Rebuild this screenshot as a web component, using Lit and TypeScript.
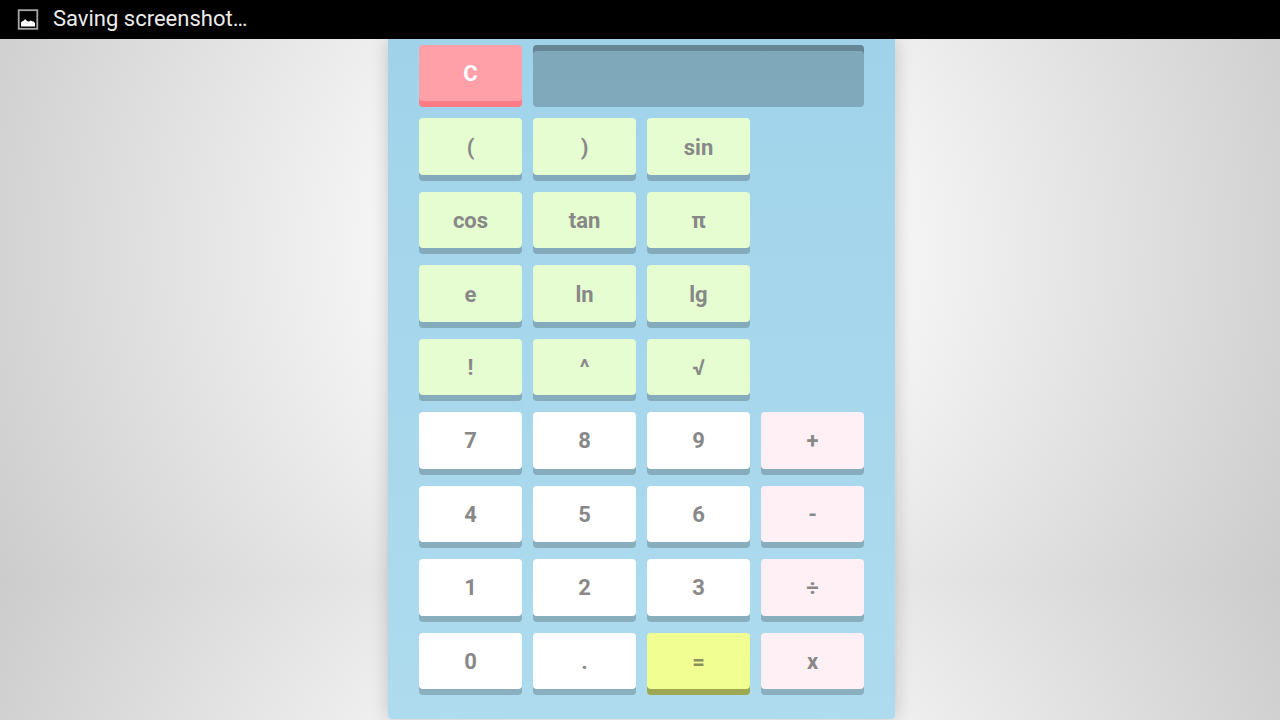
import { LitElement, html, css } from "lit";
import { customElement, state } from "lit/decorators.js";
import { classMap } from "lit/directives/class-map.js";

type Kind = "digit" | "func" | "op" | "equals" | "clear";

const KEY_ROWS: [string, Kind][][] = [
  [["(", "func"], [")", "func"], ["sin", "func"]],
  [["cos", "func"], ["tan", "func"], ["π", "func"]],
  [["e", "func"], ["ln", "func"], ["lg", "func"]],
  [["!", "func"], ["^", "func"], ["√", "func"]],
  [["7", "digit"], ["8", "digit"], ["9", "digit"], ["+", "op"]],
  [["4", "digit"], ["5", "digit"], ["6", "digit"], ["-", "op"]],
  [["1", "digit"], ["2", "digit"], ["3", "digit"], ["÷", "op"]],
  [["0", "digit"], [".", "digit"], ["=", "equals"], ["x", "op"]],
];

@customElement("status-bar")
export class StatusBar extends LitElement {
  static styles = css`
    :host {
      display: flex;
      align-items: center;
      gap: 14px;
      height: 39px;
      padding: 0 17px;
      box-sizing: border-box;
      background: #000;
      color: #ececec;
      font: 400 22px/38px Roboto, sans-serif;
      z-index: 1;
    }
    .icon {
      display: block;
      width: 22px;
      height: 22px;
      flex: none;
    }
    .label {
      height: 39px;
      white-space: nowrap;
    }
  `;

  render() {
    return html`
      <svg class="icon" viewBox="0 0 22 22" aria-hidden="true">
        <rect x="1.7" y="1.2" width="18.6" height="18.6" fill="none" stroke="#a8a8a8" stroke-width="1.8" />
        <path
          d="M4 17.4V13.6L5.6 12L6.6 11.8L7.6 10.4L8.8 10.4L10 12L11.2 12.6L12.6 12.2L13.8 11.6L15 12.2L16.2 12.2L18 14V17.4Z"
          fill="#fff"
        />
      </svg>
      <span class="label">Saving screenshot…</span>
    `;
  }
}

@customElement("calc-pad")
export class CalcPad extends LitElement {
  @state() private value = "";

  static styles = css`
    :host {
      display: grid;
      grid-template-columns: repeat(4, 1fr);
      grid-auto-rows: 1fr;
      gap: 11px;
      box-sizing: border-box;
      width: 100%;
      max-width: 507px;
      padding: 6px 31px 24px;
      border-radius: 0 0 4px 4px;
      background: linear-gradient(#a0d3ea, #aedbee);
      box-shadow: 0 0 18px rgba(0, 0, 0, 0.2);
    }
    .key,
    .display {
      box-sizing: border-box;
      min-width: 0;
      border: 0;
      border-radius: 4px;
      font: 700 22px/26px Roboto, sans-serif;
    }
    .key {
      margin: 0 0 6px;
      padding: 2px 0 0;
      background: #fff;
      color: #888;
      text-align: center;
      cursor: pointer;
      box-shadow: 0 6px rgba(0, 0, 0, 0.2);
    }
    .key:active {
      filter: brightness(0.95);
    }
    .first {
      grid-column-start: 1;
    }
    .func {
      background: #e5fdd0;
    }
    .op {
      background: #fff0f5;
    }
    .equals {
      background: #f1ff92;
      color: #888e5f;
      box-shadow: 0 6px #9da853;
    }
    .clear {
      background: #ff9fa8;
      color: #fff;
      box-shadow: 0 6px #ff7c87;
    }
    .display {
      grid-column: span 3;
      width: 100%;
      padding: 6px 12px 0;
      outline: 0;
      background: rgba(0, 0, 0, 0.2);
      box-shadow: inset 0 6px rgba(0, 0, 0, 0.2);
      color: #fff;
      text-align: right;
    }
  `;

  private press(label: string) {
    this.value = label === "C" ? "" : label === "=" ? this.value : this.value + label;
  }

  private key(label: string, kind: Kind, first: boolean) {
    return html`<button
      type="button"
      class=${classMap({ key: true, [kind]: true, first })}
      @click=${() => this.press(label)}
    >${label}</button>`;
  }

  render() {
    return html`
      ${this.key("C", "clear", true)}
      <input class="display" type="text" readonly aria-label="Result" .value=${this.value} />
      ${KEY_ROWS.map((row) => row.map(([label, kind], i) => this.key(label, kind, i === 0)))}
    `;
  }
}

@customElement("app-root")
export class AppRoot extends LitElement {
  static styles = css`
    :host {
      display: flex;
      flex-direction: column;
      min-height: 100vh;
    }
    .stage {
      flex: 1;
      display: flex;
      justify-content: center;
      padding: 0 0 1px 3px;
      overflow: hidden;
      background: radial-gradient(circle, #fff 20%, #ccc) 0 -119px / 100% 661px;
    }
  `;

  render() {
    return html`
      <status-bar></status-bar>
      <main class="stage"><calc-pad></calc-pad></main>
    `;
  }
}
